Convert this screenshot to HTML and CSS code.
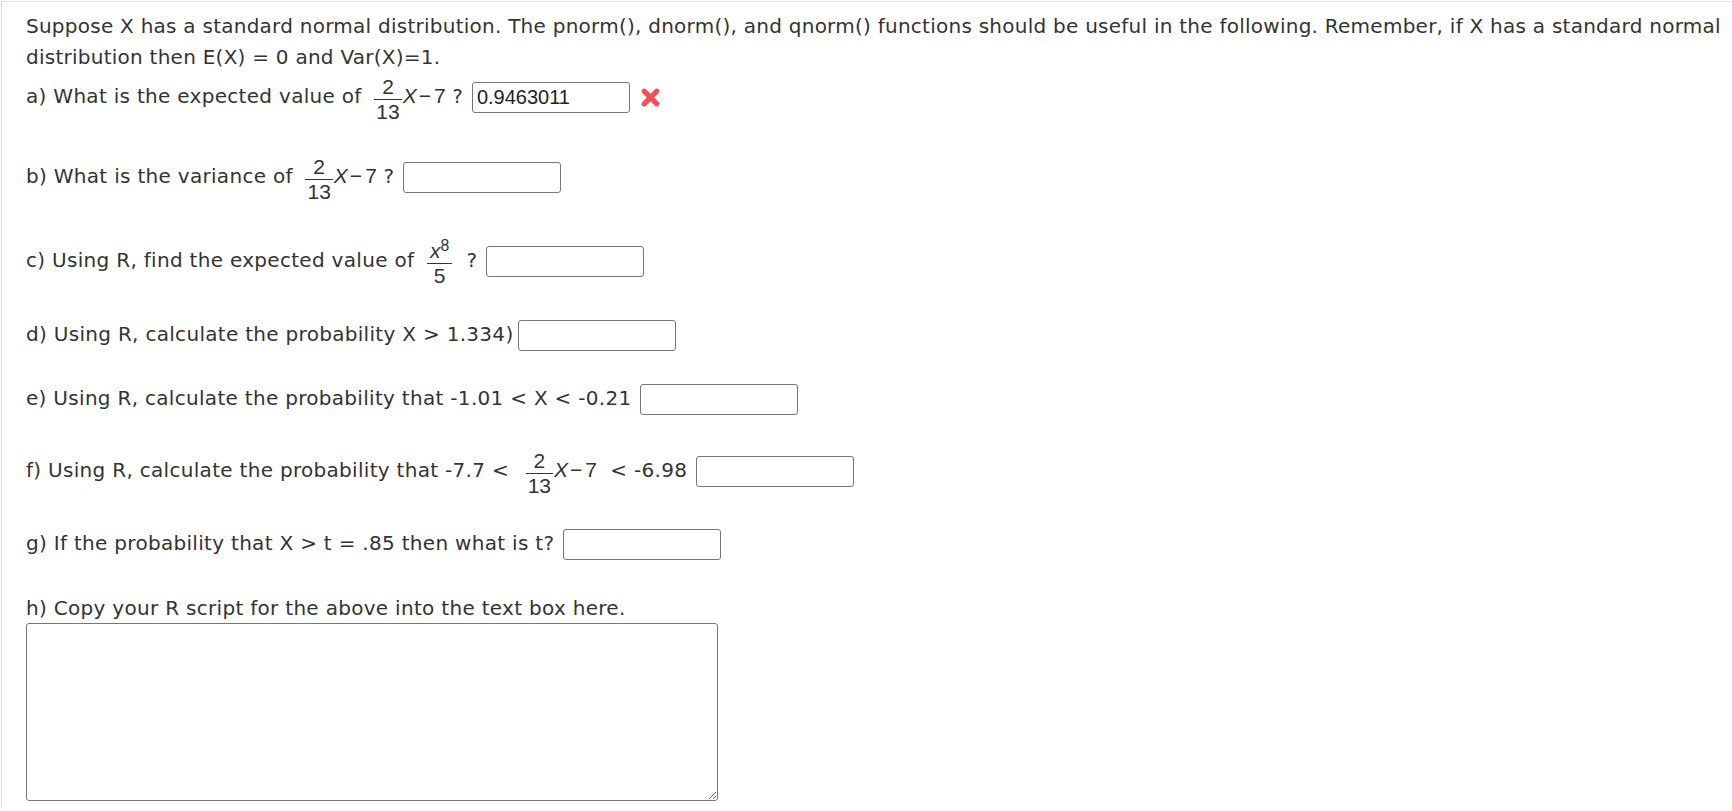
FILE: index.html
```html
<!DOCTYPE html>
<html lang="en">
<head>
<meta charset="utf-8">
<title>Standard normal distribution</title>
<link rel="stylesheet" href="styles.css">
</head>
<body>
<div class="page">
  <p class="intro">Suppose X has a standard normal distribution. The pnorm(), dnorm(), and qnorm() functions should be useful in the following. Remember, if X has a standard normal<br>distribution then E(X) = 0 and Var(X)=1.</p>

  <div class="q q-a">a) What is the expected value of <span class="math"><span class="frac"><span class="num">2</span><span class="den">13</span></span><i>X</i><span class="op">−</span>7</span> ? <input class="ans" type="text" value="0.9463011"><svg class="wrong" viewBox="0 0 20 20" aria-label="incorrect"><path d="M4 4 L16 16 M16 4 L4 16" /></svg></div>

  <div class="q q-b">b) What is the variance of <span class="math"><span class="frac"><span class="num">2</span><span class="den">13</span></span><i>X</i><span class="op">−</span>7</span> ? <input class="ans" type="text"></div>

  <div class="q q-c">c) Using R, find the expected value of <span class="math"><span class="frac frac-wide"><span class="num"><i>x</i><sup>8</sup></span><span class="den">5</span></span></span>&nbsp;&nbsp;? <input class="ans" type="text"></div>

  <div class="q q-d">d) Using R, calculate the probability X &gt; 1.334)<input class="ans ans-tight" type="text"></div>

  <div class="q q-e">e) Using R, calculate the probability that -1.01 &lt; X &lt; -0.21 <input class="ans" type="text"></div>

  <div class="q q-f">f) Using R, calculate the probability that -7.7 &lt; <span class="math math-spaced"><span class="frac"><span class="num">2</span><span class="den">13</span></span><i>X</i><span class="op">−</span>7</span> &nbsp;&lt; -6.98 <input class="ans" type="text"></div>

  <div class="q q-g">g) If the probability that X &gt; t = .85 then what is t? <input class="ans" type="text"></div>

  <div class="q q-h">h) Copy your R script for the above into the text box here.</div>
  <textarea class="script"></textarea>
</div>
</body>
</html>
```

FILE: styles.css
```css
html, body {
  margin: 0;
  background: #ffffff;
}

body {
  font-family: "DejaVu Sans", Verdana, sans-serif;
  font-size: 20px;
  color: #333333;
}

.page {
  margin: 1px 0 0 1px;
  border-top: 1px solid #dddddd;
  border-left: 1px solid #dddddd;
  padding: 9px 0 0 24px;
  height: 808px;
  box-sizing: border-box;
}

.intro {
  margin: 0;
  line-height: 31px;
  letter-spacing: 0.25px;
}

.q {
  line-height: 34px;
  white-space: nowrap;
  letter-spacing: 0.3px;
}

.q-a { margin-top: 1px; }
.q-b { margin-top: 34px; }
.q-c { margin-top: 38px; }
.q-d { margin-top: 33px; }
.q-e { margin-top: 30px; }
.q-f { margin-top: 33px; }
.q-g { margin-top: 32px; }
.q-h { margin-top: 31px; }

.math {
  font-family: "Liberation Sans", Arial, sans-serif;
  font-size: 21px;
  letter-spacing: 0;
  margin-left: 6px;
}

.math-spaced {
  margin-left: 10px;
}

.math i {
  font-style: italic;
}

.math .op {
  margin: 0 3px 0 2px;
}

.frac {
  display: inline-flex;
  flex-direction: column;
  align-items: center;
  vertical-align: middle;
  line-height: 1;
  margin-right: 1px;
  position: relative;
  top: 2px;
}

.frac .num {
  display: block;
  padding: 0 5px 2px;
  border-bottom: 1.5px solid #333333;
  align-self: stretch;
  text-align: center;
}

.frac .den {
  display: block;
  padding: 1px 2px 0;
}

.frac-wide .num {
  padding: 0 3px 2px;
}

.frac sup {
  font-size: 0.75em;
  vertical-align: 0.45em;
  line-height: 0;
}

.ans {
  box-sizing: border-box;
  width: 158px;
  height: 31px;
  margin: 0 0 0 2px;
  padding: 1px 4px;
  border: 1px solid #767676;
  border-radius: 3px;
  font-family: "Liberation Sans", Arial, sans-serif;
  font-size: 20px;
  letter-spacing: 0;
  color: #222222;
  vertical-align: middle;
  background: #ffffff;
}

.ans-tight {
  margin-left: 4px;
}

.wrong {
  width: 21px;
  height: 21px;
  margin-left: 10px;
  vertical-align: middle;
}

.wrong path {
  stroke: #f0505a;
  stroke-width: 5;
  stroke-linecap: round;
  fill: none;
}

.script {
  display: block;
  box-sizing: border-box;
  width: 692px;
  height: 178px;
  margin: -2px 0 0;
  border: 1px solid #767676;
  border-radius: 3px;
  resize: both;
  font-family: "Liberation Sans", Arial, sans-serif;
  font-size: 16px;
}
```
